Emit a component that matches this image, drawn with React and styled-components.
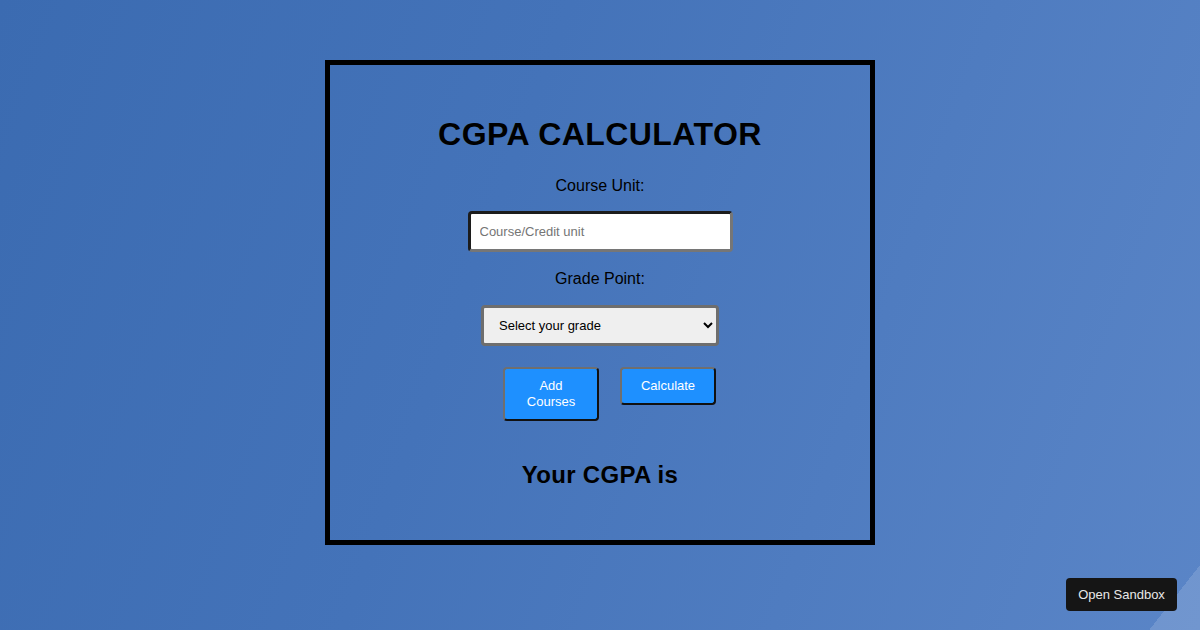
import { useState } from "react";
import styled, { createGlobalStyle } from "styled-components";

const GlobalStyle = createGlobalStyle`
  html, body {
    margin: 0;
    padding: 0;
  }

  body {
    min-height: 100vh;
    font-family: "Liberation Sans", Arial, sans-serif;
    background:
      linear-gradient(128deg, transparent 97%, rgba(255, 255, 255, 0.14) 97%),
      linear-gradient(110deg, #3b6bb1 0%, #4473b9 40%, #5a85c7 100%);
  }
`;

const Page = styled.div`
  min-height: 100vh;
  display: flex;
  justify-content: center;
  align-items: flex-start;
  padding-top: 60px;
  box-sizing: border-box;
`;

const Card = styled.div`
  width: 550px;
  height: 485px;
  box-sizing: border-box;
  border: 5px solid #000;
  display: flex;
  flex-direction: column;
  align-items: center;
  padding-top: 51px;
`;

const Title = styled.h1`
  margin: 0 0 23px;
  font-size: 32px;
  line-height: 37px;
  font-weight: bold;
  letter-spacing: 0.45px;
  color: #000;
`;

const Label = styled.label`
  font-size: 16px;
  line-height: 18px;
  color: #000;
  margin-bottom: ${(props) => props.$gap || 17}px;
  transform: translateY(1px);
`;

const UnitInput = styled.input`
  width: 265px;
  height: 41px;
  box-sizing: border-box;
  padding: 0 10px 0 9px;
  border-width: 3px;
  border-style: solid;
  border-color: #1c1c1c #767676 #767676 #1c1c1c;
  border-radius: 4px;
  background: #fff;
  font-family: "Liberation Sans", Arial, sans-serif;
  font-size: 13px;
  margin-bottom: 17px;
  outline: none;

  &::placeholder {
    color: #757575;
  }
`;

const GradeSelect = styled.select`
  width: 238px;
  height: 41px;
  box-sizing: border-box;
  padding: 0 8px 0 11px;
  border: 3px solid #6e6e6e;
  border-radius: 4px;
  background: #efefef;
  color: #000;
  font-family: "Liberation Sans", Arial, sans-serif;
  font-size: 13px;
  margin-bottom: 21px;
`;

const ButtonRow = styled.div`
  display: flex;
  align-items: flex-start;
  gap: 21px;
  padding-left: 19px;
  margin-bottom: 40px;
`;

const ActionButton = styled.button`
  width: 96px;
  box-sizing: border-box;
  padding: 9px 10px;
  background: #1e90ff;
  color: #fff;
  font-family: "Liberation Sans", Arial, sans-serif;
  font-size: 13px;
  line-height: 16px;
  border-width: 2px;
  border-style: solid;
  border-color: #6f6f6f #111 #111 #6f6f6f;
  border-radius: 4px;
  cursor: pointer;
`;

const Result = styled.h2`
  margin: 0;
  font-size: 24px;
  line-height: 28px;
  font-weight: bold;
  letter-spacing: 0.3px;
  color: #000;
`;

const SandboxLink = styled.a`
  position: fixed;
  right: 23px;
  bottom: 19px;
  width: 111px;
  height: 33px;
  display: flex;
  align-items: center;
  justify-content: center;
  background: #151515;
  color: #e8e8e8;
  border-radius: 4px;
  font-size: 13px;
  text-decoration: none;
`;

const grades = [
  { label: "A", value: 5 },
  { label: "B", value: 4 },
  { label: "C", value: 3 },
  { label: "D", value: 2 },
  { label: "E", value: 1 },
  { label: "F", value: 0 },
];

const App = () => {
  const [unit, setUnit] = useState("");
  const [grade, setGrade] = useState("");
  const [courses, setCourses] = useState([]);
  const [cgpa, setCgpa] = useState("");

  const addCourse = () => {
    if (!unit || grade === "") return;
    setCourses([...courses, { unit: Number(unit), grade: Number(grade) }]);
    setUnit("");
    setGrade("");
  };

  const calculate = () => {
    const units = courses.reduce((sum, c) => sum + c.unit, 0);
    const points = courses.reduce((sum, c) => sum + c.unit * c.grade, 0);
    setCgpa(units ? (points / units).toFixed(2) : "");
  };

  return (
    <>
      <GlobalStyle />
      <Page>
        <Card>
          <Title>CGPA CALCULATOR</Title>
          <Label>Course Unit:</Label>
          <UnitInput
            type="number"
            placeholder="Course/Credit unit"
            value={unit}
            onChange={(e) => setUnit(e.target.value)}
          />
          <Label $gap={18}>Grade Point:</Label>
          <GradeSelect value={grade} onChange={(e) => setGrade(e.target.value)}>
            <option value="">Select your grade</option>
            {grades.map((g) => (
              <option key={g.label} value={g.value}>
                {g.label}
              </option>
            ))}
          </GradeSelect>
          <ButtonRow>
            <ActionButton onClick={addCourse}>Add Courses</ActionButton>
            <ActionButton onClick={calculate}>Calculate</ActionButton>
          </ButtonRow>
          <Result>Your CGPA is {cgpa}</Result>
        </Card>
      </Page>
      <SandboxLink href="#">Open Sandbox</SandboxLink>
    </>
  );
};

export default App;
